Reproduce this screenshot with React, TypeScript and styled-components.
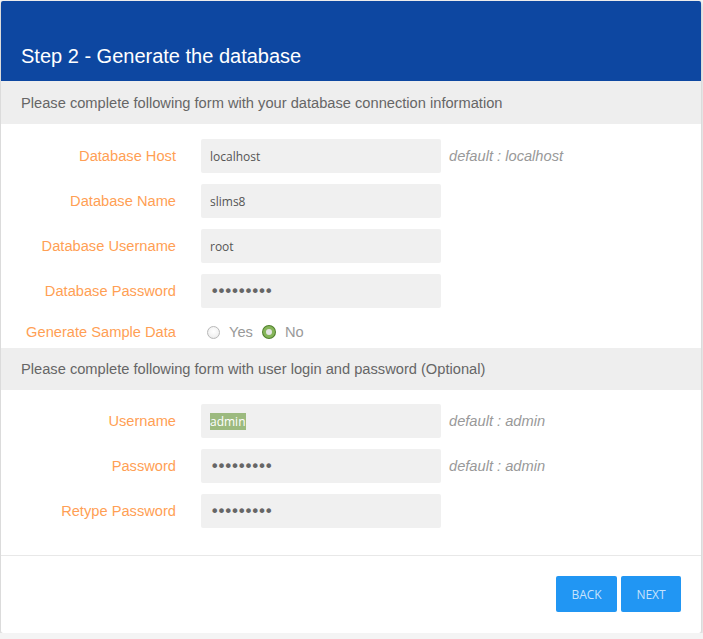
import React, { useEffect, useRef } from 'react'
import styled, { createGlobalStyle } from 'styled-components'

const colors = {
  header: '#0d47a1',
  bar: '#eeeeee',
  label: '#ff9f55',
  field: '#f0f0f0',
  muted: '#999999',
  text: '#666666',
  button: '#2196f3',
}

const GlobalStyle = createGlobalStyle`
  html, body {
    margin: 0;
    padding: 0;
    background: #f4f4f4;
  }
  body {
    padding: 1px 2px 0 1px;
    font-family: 'Liberation Sans', Arial, sans-serif;
  }
`

const Card = styled.section`
  box-sizing: border-box;
  width: 700px;
  background: #ffffff;
  box-shadow: 0 2px 4px rgba(0, 0, 0, 0.25);
  border-radius: 2px;
  overflow: hidden;
`

const Header = styled.header`
  height: 80px;
  box-sizing: border-box;
  background: ${colors.header};
  padding: 43px 20px 13px;
`

const Title = styled.h1`
  margin: 0;
  color: #ffffff;
  font-size: 20px;
  font-weight: 400;
  line-height: 24px;
`

const Bar = styled.div<{ $height: number }>`
  display: flex;
  align-items: center;
  height: ${({ $height }) => $height}px;
  padding: 0 20px;
  background: ${colors.bar};
  color: ${colors.text};
  font-size: 11pt;
`

const Group = styled.div<{ $top: number; $bottom: number; $divider?: boolean }>`
  display: grid;
  grid-template-columns: 175px 240px auto;
  column-gap: 25px;
  row-gap: 11px;
  padding: ${({ $top, $bottom }) => `${$top}px 0 ${$bottom}px`};
  border-bottom: ${({ $divider }) => ($divider ? '1px solid #e8e8e8' : 'none')};
`

const Label = styled.label`
  display: flex;
  align-items: center;
  justify-content: flex-end;
  color: ${colors.label};
  font-size: 11pt;
`

const Field = styled.input`
  box-sizing: border-box;
  width: 240px;
  height: 34px;
  margin: 0;
  padding: 0 9px;
  border: none;
  border-radius: 2px;
  background: ${colors.field};
  color: #555555;
  font-family: 'Open Sans', sans-serif;
  font-size: 12px;
  outline: none;

  &[type='password'] {
    font-family: 'DejaVu Sans', sans-serif;
    font-size: 16px;
    letter-spacing: -2.7px;
    color: #666666;
  }

  &::selection {
    background: #9cba7f;
    color: #ffffff;
  }
`

const Hint = styled.span`
  display: flex;
  align-items: center;
  margin-left: -17px;
  color: ${colors.muted};
  font-size: 11pt;
  font-style: italic;
`

const RadioRow = styled.div`
  display: flex;
  align-items: center;
  height: 26px;
  margin-left: 6px;
`

const RadioOption = styled.label`
  display: flex;
  align-items: center;
  gap: 9px;
  margin-right: 10px;
  color: ${colors.muted};
  font-size: 11pt;
`

const Radio = styled.input`
  appearance: none;
  box-sizing: border-box;
  width: 13px;
  height: 13px;
  margin: 0;
  border-radius: 50%;
  border: 1px solid #b8b8b8;
  background: radial-gradient(circle at 50% 40%, #ffffff 0%, #f2f2f2 60%, #dcdcdc 100%);

  &:checked {
    border: 3px solid #86b55a;
    background: #e4e4e4;
    box-shadow: 0 0 0 1px #4f7f2b;
    width: 12px;
    height: 12px;
    margin: 0 1px 0 0;
  }
`

const Footer = styled.footer`
  display: flex;
  justify-content: flex-end;
  gap: 4px;
  padding: 20px 20px 21px;
`

const Button = styled.button<{ $width: number }>`
  width: ${({ $width }) => $width}px;
  height: 36px;
  border: none;
  border-radius: 2px;
  background: ${colors.button};
  color: rgba(255, 255, 255, 0.75);
  font-family: 'Open Sans', sans-serif;
  font-size: 12px;
  cursor: pointer;
`

const Spacer = styled.span``

type Row = { label: string; value: string; password?: boolean; hint?: string; selected?: boolean }

const dbRows: Row[] = [
  { label: 'Database Host', value: 'localhost', hint: 'default : localhost' },
  { label: 'Database Name', value: 'slims8' },
  { label: 'Database Username', value: 'root' },
  { label: 'Database Password', value: 'password1', password: true },
]

const userRows: Row[] = [
  { label: 'Username', value: 'admin', hint: 'default : admin', selected: true },
  { label: 'Password', value: 'password1', password: true, hint: 'default : admin' },
  { label: 'Retype Password', value: 'password1', password: true },
]

const FormRows = ({ rows, selectedRef }: { rows: Row[]; selectedRef: React.RefObject<HTMLInputElement | null> }) => (
  <>
    {rows.map((row) => (
      <React.Fragment key={row.label}>
        <Label>{row.label}</Label>
        <Field
          type={row.password ? 'password' : 'text'}
          defaultValue={row.value}
          ref={row.selected ? selectedRef : undefined}
        />
        {row.hint ? <Hint>{row.hint}</Hint> : <Spacer />}
      </React.Fragment>
    ))}
  </>
)

export default function App() {
  const usernameRef = useRef<HTMLInputElement>(null)

  useEffect(() => {
    const input = usernameRef.current
    if (!input) return
    input.focus()
    input.select()
  }, [])

  return (
    <>
      <GlobalStyle />
      <Card>
        <Header>
          <Title>Step 2 - Generate the database</Title>
        </Header>

        <Bar $height={43}>Please complete following form with your database connection information</Bar>
        <Group $top={15} $bottom={3}>
          <FormRows rows={dbRows} selectedRef={usernameRef} />
          <Label>Generate Sample Data</Label>
          <RadioRow>
            <RadioOption>
              <Radio type="radio" name="sample" value="yes" />
              Yes
            </RadioOption>
            <RadioOption>
              <Radio type="radio" name="sample" value="no" defaultChecked />
              No
            </RadioOption>
          </RadioRow>
          <Spacer />
        </Group>

        <Bar $height={42}>Please complete following form with user login and password (Optional)</Bar>
        <Group $top={14} $bottom={27} $divider>
          <FormRows rows={userRows} selectedRef={usernameRef} />
        </Group>

        <Footer>
          <Button $width={61}>BACK</Button>
          <Button $width={60}>NEXT</Button>
        </Footer>
      </Card>
    </>
  )
}
